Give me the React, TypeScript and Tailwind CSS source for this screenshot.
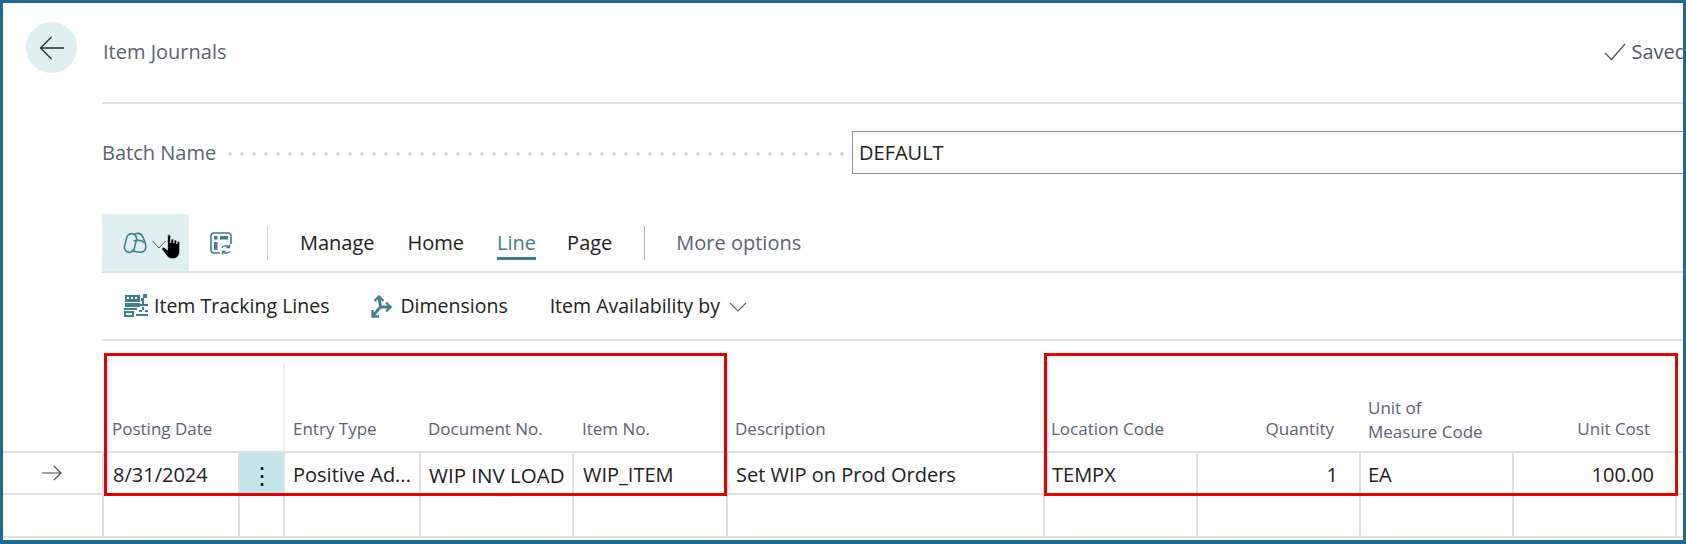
const columns = "grid grid-cols-[101px_136px_45px_136px_153px_154px_317px_153px_163px_153px_163px_6px]";

const headers = [
  { label: "", cls: "" },
  { label: "Posting Date", cls: "pl-[8px]" },
  { label: "", cls: "border-r-2 border-[#f0f0f0]" },
  { label: "Entry Type", cls: "pl-[8px]" },
  { label: "Document No.", cls: "pl-[7px]" },
  { label: "Item No.", cls: "pl-[8px]" },
  { label: "Description", cls: "pl-[7px]" },
  { label: "Location Code", cls: "pl-[6px]" },
  { label: "Quantity", cls: "pr-[27px] text-right" },
  { label: "Unit of", sub: "Measure Code", cls: "pl-[7px]" },
  { label: "Unit Cost", cls: "pr-[27px] text-right" },
  { label: "", cls: "" },
];

const cells = [
  { text: "8/31/2024", cls: "pl-[9px]" },
  { text: "⋮", cls: "justify-center bg-[#c3e5ea] text-[24px]" },
  { text: "Positive Ad...", cls: "pl-[8px]" },
  { text: "WIP INV LOAD", cls: "pl-[8px] text-[20.500px]" },
  { text: "WIP_ITEM", cls: "pl-[9px]" },
  { text: "Set WIP on Prod Orders", cls: "pl-[8px]" },
  { text: "TEMPX", cls: "pl-[7px]" },
  { text: "1", cls: "justify-end pr-[21px]" },
  { text: "EA", cls: "pl-[7px]" },
  { text: "100.00", cls: "justify-end pr-[21px]" },
];

const CopilotIcon = () => (
  <svg width="25" height="22" viewBox="0 0 25 22" fill="none" stroke="#3f7f8b" strokeWidth="1.600">
    <rect x="3.500" y="1.500" width="10" height="19" rx="5" transform="rotate(14 8.500 11)" />
    <path d="M12.500 2.200c3-1.200 6-.8 7.500 1.300 1.500 2.400 4 8.500 3.800 12-.2 3.500-3 5-6.500 4.700-3-.2-5.500-.8-7.500-2.200" />
    <path d="M11.500 9c3.500-1.200 8-.8 11 1.500" />
  </svg>
);

const ActionIcon = () => (
  <svg width="24" height="24" viewBox="0 0 24 24" fill="none" stroke="#3f7f8b" strokeWidth="1.600">
    <path d="M11 22H5a3 3 0 0 1-3-3V5a3 3 0 0 1 3-3h14a3 3 0 0 1 3 3v8" />
    <rect x="5" y="5" width="3.500" height="3.500" fill="#3f7f8b" stroke="none" />
    <rect x="11" y="5" width="8" height="3.500" fill="#3f7f8b" stroke="none" />
    <rect x="5" y="11" width="3.500" height="8" fill="#3f7f8b" stroke="none" />
    <path d="M13 17c1-2.500 5-3 7-1M20.500 13.500V16.500H17.500M21 20c-1 2.500-5 3-7 1M13.500 23.500V20.500H16.500" strokeWidth="1.300" />
  </svg>
);

const TrackingIcon = () => (
  <svg width="26" height="24" viewBox="0 0 26 24" fill="#3f7f8b">
    <path fillRule="evenodd" d="M2 1h15v7H2zM4 3v2h2V3zm4 0v2h2V3zm4 0v2h2V3z" />
    <path d="M2 9h15v4H2zM1 14h13v2H1z" />
    <path fillRule="evenodd" d="M1 17h10v6H1zm2 2v2h6v-2z" />
    <path d="M20 0h4v4h-4zM18 4h3v3h-3zM19 7h2v4h-2zM17 10h8v2h-8zM19 13h2v3h-2zM16 16h3v2h-3zM22 16h3v2h-3zM13 20h12v2H13z" />
  </svg>
);

const DimensionsIcon = () => (
  <svg width="21" height="23" viewBox="0 0 21 23" fill="none" stroke="#3f7f8b" strokeWidth="2.800">
    <path d="M8 2l1.500 10M9.500 12H18M9.500 12 2.500 20" />
    <path d="M3.500 6 8 1.500 12.500 6M15 7.500l4.500 4.500L15 16.500M1.500 15v6.500H8" strokeWidth="2.300" />
  </svg>
);

const HandCursor = () => (
  <svg width="21" height="26" viewBox="0 0 24 30" className="absolute left-[158px] top-[231px]">
    <path
      d="M7.500 2.500c0-2 3.400-2 3.400 0V10h.6V7c0-1.700 3-1.700 3 0v3.500h.5V8.200c0-1.700 3-1.700 3 0V11.500h.5V10c0-1.700 2.900-1.700 2.900 0V20c0 4.800-3.200 8.500-8 8.500-3.500 0-5.700-1.500-7.700-4.500L1.200 18c-1-1.700 1-3.500 2.600-2.200L7.500 18.500z"
      fill="#000000"
      stroke="#ffffff"
      strokeWidth="0.600"
    />
  </svg>
);

export default function App() {
  return (
    <div className="relative w-[1686px] h-[544px] overflow-hidden bg-white border-x-[3px] border-t-[3px] border-b-[4px] border-[#1f6b92] font-['Open_Sans','Noto_Sans',sans-serif] text-[#212121]">
      {/* title bar */}
      <div className="flex h-[99px] pl-[23px]">
        <button className="mt-[19px] flex h-[51px] w-[51px] items-center justify-center rounded-full bg-[#dfeff2]">
          <svg width="26" height="24" viewBox="0 0 26 24" fill="none" stroke="#2b2b2b" strokeWidth="1.300">
            <path d="M25 12H1.500M12.500 1 1.500 12l11 11" />
          </svg>
        </button>
        <div className="ml-[26px] mt-[36px] text-[20px] leading-[26px] text-[#5b6372]">Item Journals</div>
        <div className="ml-auto mt-[36px] flex h-[26px] items-center gap-[5px] whitespace-nowrap text-[20px] text-[#4f5868] -mr-[4px]">
          <svg width="22" height="18" viewBox="0 0 22 18" fill="none" stroke="#4f5868" strokeWidth="1.300">
            <path d="M1 10l6.500 6.500L21 1" />
          </svg>
          Saved
        </div>
      </div>

      <div className="ml-[99px]">
        <div className="border-t-2 border-[#e0e0e0]" />

        {/* batch name */}
        <div className="mt-[27px] flex h-[43px] items-center">
          <span className="text-[20px] text-[#5b6372]">Batch Name</span>
          <div className="mx-[8px] mt-[2px] h-[4px] flex-1 bg-[radial-gradient(circle,#d6d6d6_1.500px,transparent_2px)] bg-[length:12px_4px]" />
          <div className="flex h-[43px] w-[831px] items-center border border-r-0 border-[#8a8f9a] pl-[6px] text-[20px]">DEFAULT</div>
        </div>

        {/* action bar */}
        <div className="mt-[40px] flex h-[59px] items-center border-b-2 border-[#e0e1e4] text-[20px]">
          <div className="flex h-[57px] w-[87px] items-center rounded-t-[3px] bg-[#dfeff2] pl-[20px]">
            <CopilotIcon />
            <svg width="14" height="10" viewBox="0 0 14 10" fill="none" stroke="#555555" className="ml-[5px] mt-[4px]">
              <path d="M0.500 1 7 8l6.500-7" />
            </svg>
          </div>
          <div className="ml-[20px] flex"><ActionIcon /></div>
          <div className="ml-[34px] h-[34px] w-px bg-[#cfcfcf]" />
          <span className="ml-[32px]">Manage</span>
          <span className="ml-[33px]">Home</span>
          <span className="relative ml-[33px] text-[#3f7f8b]">
            Line
            <span className="absolute inset-x-0 top-[29px] h-[3px] bg-[#3f7f8b]" />
          </span>
          <span className="ml-[31px]">Page</span>
          <div className="ml-[32px] h-[34px] w-px bg-[#a9afb8]" />
          <span className="ml-[31px] text-[#5b6372]">More options</span>
        </div>

        {/* line actions */}
        <div className="flex h-[68px] items-center border-b-2 border-[#e0e1e4] pl-[21px] text-[19.500px]">
          <TrackingIcon />
          <span className="ml-[5px]">Item Tracking Lines</span>
          <div className="ml-[42px] flex"><DimensionsIcon /></div>
          <span className="ml-[8px]">Dimensions</span>
          <span className="ml-[42px]">Item Availability by</span>
          <svg width="18" height="10" viewBox="0 0 18 10" fill="none" stroke="#5b6372" strokeWidth="1.100" className="ml-[9px] mt-[2px]">
            <path d="M1 1l8 8 8-8" />
          </svg>
        </div>
      </div>

      {/* lines table */}
      <div className={`${columns} mt-[22px] h-[90px] border-b-2 border-[#dfe1e6] text-[17px] leading-[24px] text-[#5b6372]`}>
        {headers.map((h, i) => (
          <div key={i} className={`flex flex-col justify-end whitespace-nowrap ${h.sub ? "pb-[7px]" : "pb-[10px]"} ${h.cls}`}>
            {h.label && <div>{h.label}</div>}
            {h.sub && <div>{h.sub}</div>}
          </div>
        ))}
      </div>
      <div className={`${columns} h-[42px] border-b-2 border-[#dfe1e6] text-[20px]`}>
        <div className="flex items-center justify-center border-r-2 border-[#dfe1e6] pr-[2px]">
          <svg width="20" height="16" viewBox="0 0 20 16" fill="none" stroke="#4b4b4b" strokeWidth="1.100">
            <path d="M0 8h19M12 1l7 7-7 7" />
          </svg>
        </div>
        {cells.map((c, i) => (
          <div key={i} className={`flex items-center whitespace-nowrap border-r-2 border-[#dfe1e6] pt-[4px] ${c.cls}`}>{c.text}</div>
        ))}
      </div>
      <div className={`${columns} h-[43px] border-b-2 border-[#dfe1e6]`}>
        {Array.from({ length: 11 }).map((_, i) => (
          <div key={i} className="border-r-2 border-[#dfe1e6]" />
        ))}
      </div>

      {/* red callouts drawn over the grid */}
      <div className="absolute left-[101px] top-[350px] h-[143px] w-[623px] border-[3px] border-[#e60000]" />
      <div className="absolute left-[1041px] top-[350px] h-[143px] w-[634px] border-[3px] border-[#e60000]" />
      <HandCursor />
    </div>
  );
}
